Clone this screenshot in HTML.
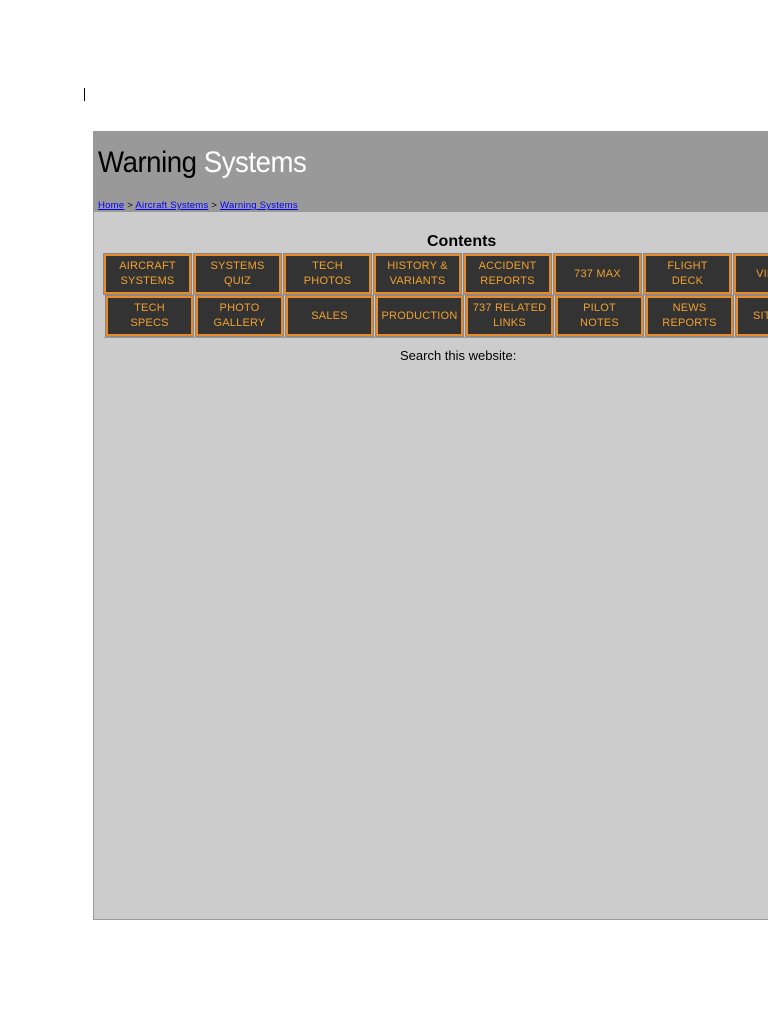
<!DOCTYPE html>
<html><head><style>
body{margin:0;background:#fff;width:768px;height:1024px;overflow:hidden;position:relative;font-family:"Liberation Sans",sans-serif}
.cur{position:absolute;left:84px;top:88px;width:1px;height:13px;background:#000}
.panel{position:absolute;left:93px;top:131px;width:675px;height:787px;background:#ccc;border:1px solid #999;border-right:none;overflow:hidden}
.hdr{position:absolute;left:0;top:0;width:100%;height:80px;background:#999}
.title{position:absolute;left:4px;top:14px;font-size:30px;color:#000;letter-spacing:-0.5px;transform:scaleX(0.92);transform-origin:left}
.title span{color:#fff}
.bc{position:absolute;left:4px;top:68px;font-size:9.6px;letter-spacing:0.2px;color:#000}
.bc a{color:#00f;text-decoration:underline}
.contents{position:absolute;left:333px;top:101px;font-size:16px;font-weight:bold}
.b{position:absolute;width:83px;height:36px;background:#333;border:2px solid #e8892a;box-shadow:0 0 0 1px #888;color:#f0a030;font-size:11px;text-align:center;display:flex;align-items:center;justify-content:center;line-height:15px;letter-spacing:0.2px;box-sizing:content-box}
.line{position:absolute;left:10px;top:205px;width:680px;height:1px;background:#999}
.search{position:absolute;left:306px;top:216px;font-size:13px}
</style></head><body>
<div class="cur"></div>
<div class="panel">
<div class="hdr">
<div class="title">Warning <span>Systems</span></div>
<div class="bc"><a>Home</a> &gt; <a>Aircraft Systems</a> &gt; <a>Warning Systems</a></div>
</div>
<div class="contents">Contents</div>
<div class="b" style="left:10px;top:122px">AIRCRAFT<br>SYSTEMS</div>
<div class="b" style="left:100px;top:122px">SYSTEMS<br>QUIZ</div>
<div class="b" style="left:190px;top:122px">TECH<br>PHOTOS</div>
<div class="b" style="left:280px;top:122px">HISTORY &amp;<br>VARIANTS</div>
<div class="b" style="left:370px;top:122px">ACCIDENT<br>REPORTS</div>
<div class="b" style="left:460px;top:122px">737 MAX</div>
<div class="b" style="left:550px;top:122px">FLIGHT<br>DECK</div>
<div class="b" style="left:640px;top:122px">VIDEOS</div>
<div class="b" style="left:12px;top:164px">TECH<br>SPECS</div>
<div class="b" style="left:102px;top:164px">PHOTO<br>GALLERY</div>
<div class="b" style="left:192px;top:164px">SALES</div>
<div class="b" style="left:282px;top:164px">PRODUCTION</div>
<div class="b" style="left:372px;top:164px">737 RELATED<br>LINKS</div>
<div class="b" style="left:462px;top:164px">PILOT<br>NOTES</div>
<div class="b" style="left:552px;top:164px">NEWS<br>REPORTS</div>
<div class="b" style="left:642px;top:164px">SITE MAP</div>
<div class="line"></div>
<div class="search">Search this website:</div>
</div>
</body></html>
